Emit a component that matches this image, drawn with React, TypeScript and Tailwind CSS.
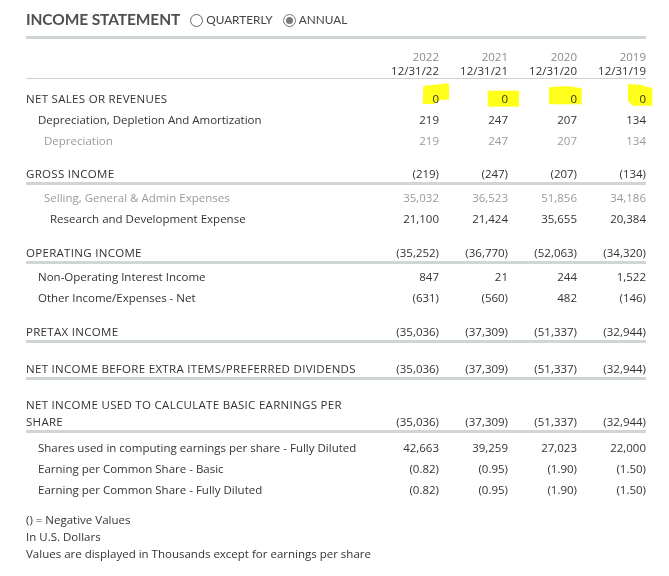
import React from "react";

type Row = {
  label: string;
  values: string[];
  indent?: number;
  muted?: boolean;
  caps?: boolean;
};

type Group = {
  header: string[];
  values: string[];
  mt: string;
  rowsMt: string;
  rows: Row[];
};

const years = [
  { year: "2022", date: "12/31/22" },
  { year: "2021", date: "12/31/21" },
  { year: "2020", date: "12/31/20" },
  { year: "2019", date: "12/31/19" },
];

const topRows: Row[] = [
  { label: "NET SALES OR REVENUES", values: ["0", "0", "0", "0"], caps: true },
  { label: "Depreciation, Depletion And Amortization", values: ["219", "247", "207", "134"], indent: 1 },
  { label: "Depreciation", values: ["219", "247", "207", "134"], indent: 2, muted: true },
];

const groups: Group[] = [
  {
    header: ["GROSS INCOME"],
    values: ["(219)", "(247)", "(207)", "(134)"],
    mt: "mt-[14px]",
    rowsMt: "mt-[2px]",
    rows: [
      { label: "Selling, General & Admin Expenses", values: ["35,032", "36,523", "51,856", "34,186"], indent: 2, muted: true },
      { label: "Research and Development Expense", values: ["21,100", "21,424", "35,655", "20,384"], indent: 3 },
    ],
  },
  {
    header: ["OPERATING INCOME"],
    values: ["(35,252)", "(36,770)", "(52,063)", "(34,320)"],
    mt: "mt-[15px]",
    rowsMt: "mt-[2px]",
    rows: [
      { label: "Non-Operating Interest Income", values: ["847", "21", "244", "1,522"], indent: 1 },
      { label: "Other Income/Expenses - Net", values: ["(631)", "(560)", "482", "(146)"], indent: 1 },
    ],
  },
  {
    header: ["PRETAX INCOME"],
    values: ["(35,036)", "(37,309)", "(51,337)", "(32,944)"],
    mt: "mt-[15px]",
    rowsMt: "mt-[2px]",
    rows: [],
  },
  {
    header: ["NET INCOME BEFORE EXTRA ITEMS/PREFERRED DIVIDENDS"],
    values: ["(35,036)", "(37,309)", "(51,337)", "(32,944)"],
    mt: "mt-[17px]",
    rowsMt: "mt-[2px]",
    rows: [],
  },
  {
    header: ["NET INCOME USED TO CALCULATE BASIC EARNINGS PER", "SHARE"],
    values: ["(35,036)", "(37,309)", "(51,337)", "(32,944)"],
    mt: "mt-[16px]",
    rowsMt: "mt-[4px]",
    rows: [
      { label: "Shares used in computing earnings per share - Fully Diluted", values: ["42,663", "39,259", "27,023", "22,000"], indent: 1 },
      { label: "Earning per Common Share - Basic", values: ["(0.82)", "(0.95)", "(1.90)", "(1.50)"], indent: 1 },
      { label: "Earning per Common Share - Fully Diluted", values: ["(0.82)", "(0.95)", "(1.90)", "(1.50)"], indent: 1 },
    ],
  },
];

const indents = ["pl-0", "pl-[12px]", "pl-[18px]", "pl-[24px]"];

function DataRow({ row, highlight }: { row: Row; highlight?: boolean }) {
  return (
    <div className={`relative flex h-[21px] items-center ${row.muted ? "text-[#9a9a9a]" : "text-[#333]"}`}>
      <div className={`flex-1 ${indents[row.indent ?? 0]} ${row.caps ? "tracking-[0.3px]" : ""}`}>{row.label}</div>
      {row.values.map((v, i) => (
        <div key={i} className="relative z-10 w-[69px] text-right">
          {v}
        </div>
      ))}
      {highlight && (
        <svg className="pointer-events-none absolute left-0 top-0 z-20 h-full w-full overflow-visible mix-blend-multiply">
          <g transform="translate(-26 -88)" fill="#ffff1a">
            <polygon points="423.3,86 449,83.3 449,99.5 440,100 433.3,104 422.7,104" />
            <polygon points="487.7,90.7 519,90.7 519,106.7 487.7,106.7" />
            <polygon points="549,87.3 566.7,86 581.7,88.3 581.7,104.3 549,104.3" />
            <polygon points="628,84 640,84.7 652.3,88.3 652.3,105.7 633,105.7 628,101" />
          </g>
        </svg>
      )}
    </div>
  );
}

export default function App() {
  return (
    <div
      className="min-h-screen w-[669px] bg-white pl-[26px] text-[11.5px] text-[#333]"
      style={{ fontFamily: "'Open Sans', Lato, sans-serif" }}
    >
      <div className="w-[620px]">
        {/* title */}
        <div className="flex h-[36px] items-center pt-[4px]">
          <h1 className="font-['Lato'] text-[15.5px] font-bold tracking-[-0.1px] text-[#4f4f4f]">INCOME STATEMENT</h1>
          <label className="ml-[10px] flex items-center gap-[3px] font-['Lato'] text-[11.8px] text-[#444]">
            <span className="inline-block h-[13px] w-[13px] rounded-full border border-[#666] bg-white" />
            QUARTERLY
          </label>
          <label className="ml-[10px] flex items-center gap-[3px] font-['Lato'] text-[11.8px] text-[#444]">
            <span className="flex h-[13px] w-[13px] items-center justify-center rounded-full border border-[#777] bg-white">
              <span className="h-[7px] w-[7px] rounded-full bg-[#7a7a7a]" />
            </span>
            ANNUAL
          </label>
        </div>
        <div className="h-[3px] bg-[#d0d5d7]" />

        {/* years */}
        <div className="flex pt-[11px] leading-[14px]">
          <div className="flex-1" />
          {years.map((y) => (
            <div key={y.year} className="w-[69px] text-right">
              <div className="text-[#8a8a8a]">{y.year}</div>
              <div className="text-[#333]">{y.date}</div>
            </div>
          ))}
        </div>
        <div className="h-px bg-[#cfcfcf]" />

        <div className="mt-[9px]">
          {topRows.map((r, i) => (
            <DataRow key={r.label} row={r} highlight={i === 0} />
          ))}
        </div>

        {groups.map((g) => (
          <div key={g.header[0]} className={g.mt}>
            <div className="flex items-end leading-[17px] text-[#333]">
              <div className="flex-1 tracking-[0.3px]">
                {g.header.map((h) => (
                  <div key={h}>{h}</div>
                ))}
              </div>
              {g.values.map((v, i) => (
                <div key={i} className="w-[69px] text-right">
                  {v}
                </div>
              ))}
            </div>
            <div className="h-[3px] bg-[#d0d5d7]" />
            {g.rows.length > 0 && (
              <div className={g.rowsMt}>
                {g.rows.map((r) => (
                  <DataRow key={r.label} row={r} />
                ))}
              </div>
            )}
          </div>
        ))}

        <div className="mt-[11px] leading-[17px] text-[#333]">
          <div>() = Negative Values</div>
          <div>In U.S. Dollars</div>
          <div>Values are displayed in Thousands except for earnings per share</div>
        </div>
      </div>
    </div>
  );
}
